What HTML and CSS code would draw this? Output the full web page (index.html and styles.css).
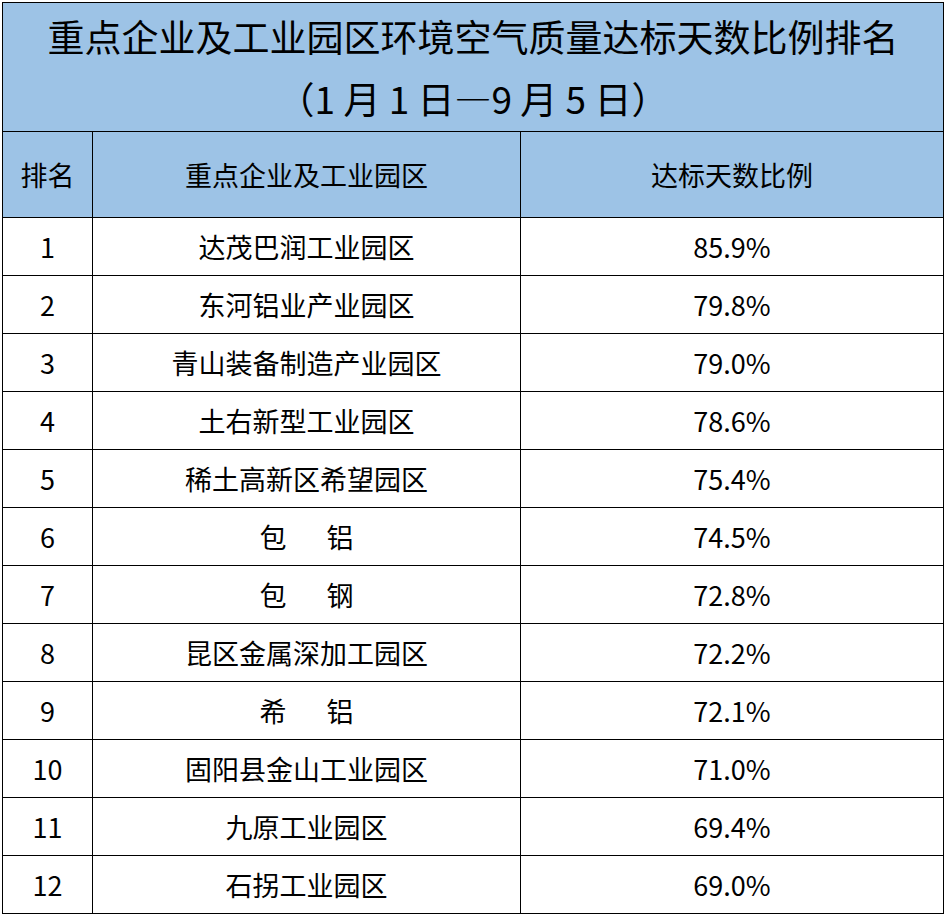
FILE: index.html
```html
<!DOCTYPE html>
<html lang="zh">
<head>
<meta charset="utf-8">
<link rel="stylesheet" href="styles.css">
</head>
<body>
<table class="rank">
  <colgroup>
    <col class="c1"><col class="c2"><col class="c3">
  </colgroup>
  <thead>
    <tr class="title-row">
      <th colspan="3" class="title">重点企业及工业园区环境空气质量达标天数比例排名<br>（1 月 1 日—9 月 5 日）</th>
    </tr>
    <tr class="head-row">
      <th>排名</th>
      <th>重点企业及工业园区</th>
      <th>达标天数比例</th>
    </tr>
  </thead>
  <tbody>
    <tr><td>1</td><td>达茂巴润工业园区</td><td>85.9%</td></tr>
    <tr><td>2</td><td>东河铝业产业园区</td><td>79.8%</td></tr>
    <tr><td>3</td><td>青山装备制造产业园区</td><td>79.0%</td></tr>
    <tr><td>4</td><td>土右新型工业园区</td><td>78.6%</td></tr>
    <tr><td>5</td><td>稀土高新区希望园区</td><td>75.4%</td></tr>
    <tr><td>6</td><td>包<span class="gap"></span>铝</td><td>74.5%</td></tr>
    <tr><td>7</td><td>包<span class="gap"></span>钢</td><td>72.8%</td></tr>
    <tr><td>8</td><td>昆区金属深加工园区</td><td>72.2%</td></tr>
    <tr><td>9</td><td>希<span class="gap"></span>铝</td><td>72.1%</td></tr>
    <tr><td>10</td><td>固阳县金山工业园区</td><td>71.0%</td></tr>
    <tr><td>11</td><td>九原工业园区</td><td>69.4%</td></tr>
    <tr><td>12</td><td>石拐工业园区</td><td>69.0%</td></tr>
  </tbody>
</table>
</body>
</html>
```

FILE: styles.css
```css
html, body {
  margin: 0;
  padding: 0;
  background: #ffffff;
}
body {
  padding: 2px 0 0 2px;
  font-family: "Microsoft YaHei", "Noto Sans CJK SC", "Noto Sans", sans-serif;
  color: #000;
}
.rank {
  border-collapse: collapse;
  width: 941px;
  table-layout: fixed;
}
.c1 { width: 90px; }
.c2 { width: 428px; }
.c3 { width: 423px; }
.rank th, .rank td {
  border: 1.5px solid #000;
  text-align: center;
  vertical-align: middle;
  padding: 0;
  font-weight: normal;
}
.title-row th {
  background: #9dc3e6;
  height: 128px;
  font-size: 37px;
  line-height: 62px;
}
.head-row th {
  background: #9dc3e6;
  height: 85px;
  font-size: 27px;
}
.rank td {
  height: 57px;
  font-size: 27px;
}
.gap {
  display: inline-block;
  width: 40px;
}
```
